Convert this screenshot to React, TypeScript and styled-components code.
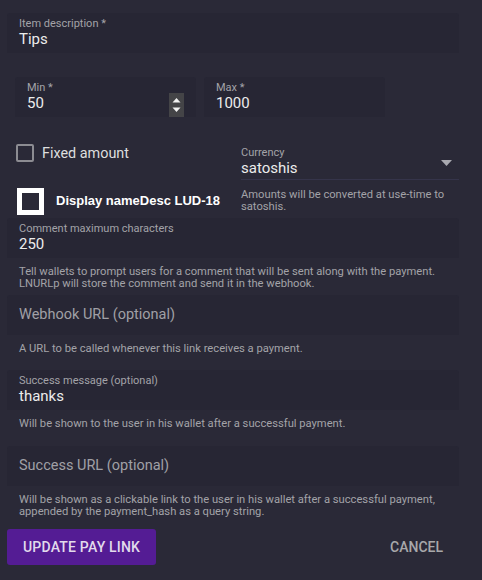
import styled, { createGlobalStyle } from "styled-components";

const GlobalStyle = createGlobalStyle`
  html, body {
    margin: 0;
    padding: 0;
    background: #2a2937;
  }
  body {
    font-family: Roboto, "Liberation Sans", sans-serif;
    color: #e6e6e6;
    min-height: 580px;
  }
`;

function Spinner() {
  return (
    <SpinBox>
      <svg width="15" height="24" viewBox="0 0 15 24">
        <path d="M3.5 9.5 L7.5 5 L11.5 9.5 Z" fill="#f2f2f2" />
        <path d="M3.5 14.5 L11.5 14.5 L7.5 19 Z" fill="#f2f2f2" />
      </svg>
    </SpinBox>
  );
}

export default function App() {
  return (
    <>
      <GlobalStyle />
      <Form>
        <Field>
          <Label>Item description *</Label>
          <Value>Tips</Value>
        </Field>

        <AmountRow>
          <Field>
            <Label>Min *</Label>
            <ValueRow>
              <Value>50</Value>
              <Spinner />
            </ValueRow>
          </Field>
          <Field>
            <Label>Max *</Label>
            <ValueRow>
              <Value>1000</Value>
            </ValueRow>
          </Field>
        </AmountRow>

        <OptionsGrid>
          <div>
            <CheckRow>
              <Check />
              <CheckLabel>Fixed amount</CheckLabel>
            </CheckRow>
            <NativeRow>
              <NativeCheck />
              <NativeLabel>Display nameDesc LUD-18</NativeLabel>
            </NativeRow>
          </div>
          <div>
            <Select>
              <div>
                <Label>Currency</Label>
                <Value>satoshis</Value>
              </div>
              <svg width="11" height="6" viewBox="0 0 11 6">
                <path d="M0 0 L11 0 L5.5 6 Z" fill="#a9a9b0" />
              </svg>
            </Select>
            <Hint $side>Amounts will be converted at use-time to satoshis.</Hint>
          </div>
        </OptionsGrid>

        <Field $top={3}>
          <Label>Comment maximum characters</Label>
          <Value>250</Value>
        </Field>
        <Hint>
          Tell wallets to prompt users for a comment that will be sent along with the payment.
          LNURLp will store the comment and send it in the webhook.
        </Hint>

        <Field $top={5}>
          <Placeholder>Webhook URL (optional)</Placeholder>
        </Field>
        <Hint>A URL to be called whenever this link receives a payment.</Hint>

        <Field $top={15}>
          <Label>Success message (optional)</Label>
          <Value>thanks</Value>
        </Field>
        <Hint>Will be shown to the user in his wallet after a successful payment.</Hint>

        <Field $top={16}>
          <Placeholder>Success URL (optional)</Placeholder>
        </Field>
        <Hint>
          Will be shown as a clickable link to the user in his wallet after a successful payment,
          appended by the payment_hash as a query string.
        </Hint>

        <Actions>
          <PrimaryButton>Update pay link</PrimaryButton>
          <FlatButton>Cancel</FlatButton>
        </Actions>
      </Form>
    </>
  );
}

const Form = styled.div`
  padding: 13px 23px 0 7px;
`;

const Field = styled.div<{ $top?: number }>`
  margin-top: ${(p) => p.$top ?? 0}px;
  height: 40px;
  box-sizing: border-box;
  padding: 5px 12px 0;
  background: #272634;
  border-radius: 3px 3px 0 0;
  display: flex;
  flex-direction: column;
`;

const Label = styled.div`
  font-size: 11px;
  line-height: 12px;
  color: #a3a3a8;
`;

const Value = styled.div`
  font-size: 15px;
  line-height: 18px;
  color: #ececec;
`;

const ValueRow = styled.div`
  display: flex;
  align-items: center;
  justify-content: space-between;
  height: 24px;
  margin-top: -3px;
`;

const SpinBox = styled.div`
  width: 15px;
  height: 24px;
  margin-top: 4px;
  background: #444447;
  display: flex;
`;

const Placeholder = styled.div`
  font-size: 14.5px;
  line-height: 30px;
  color: #a0a0a6;
`;

const AmountRow = styled.div`
  display: grid;
  grid-template-columns: 181px 181px;
  gap: 8px;
  margin: 24px 0 0 8px;
`;

const OptionsGrid = styled.div`
  display: grid;
  grid-template-columns: 226px 1fr;
  gap: 8px;
  margin-top: 23px;
`;

const CheckRow = styled.div`
  display: flex;
  align-items: center;
  height: 26px;
  padding-left: 9px;
  gap: 8px;
`;

const Check = styled.div`
  width: 18px;
  height: 18px;
  box-sizing: border-box;
  border: 2px solid #8c8c92;
  border-radius: 2px;
`;

const CheckLabel = styled.span`
  font-size: 14.4px;
  color: #dedede;
`;

const NativeRow = styled.div`
  display: flex;
  align-items: center;
  margin-top: 22px;
  padding-left: 10px;
  gap: 12px;
`;

const NativeCheck = styled.div`
  width: 27px;
  height: 27px;
  box-sizing: border-box;
  border: 5px solid #ffffff;
  background: #2a2937;
`;

const NativeLabel = styled.span`
  font-family: "Liberation Sans", Arial, sans-serif;
  font-weight: 700;
  font-size: 13px;
  color: #ffffff;
  margin-top: -2px;
`;

const Select = styled.div`
  height: 40px;
  box-sizing: border-box;
  padding-top: 7px;
  border-bottom: 1px solid #35344a;
  display: flex;
  justify-content: space-between;
  align-items: center;
  padding-right: 7px;

  & > div {
    align-self: flex-start;
  }
`;

const Hint = styled.div<{ $side?: boolean }>`
  font-size: 11.2px;
  line-height: 12px;
  color: #a3a3a8;
  padding: ${(p) => (p.$side ? "9px 0 0" : "8px 0 0 12px")};
`;

const Actions = styled.div`
  display: flex;
  justify-content: space-between;
  align-items: center;
  margin-top: 11px;
`;

const PrimaryButton = styled.button`
  height: 36px;
  padding: 0 16px;
  border: none;
  border-radius: 3px;
  background: #541c94;
  color: #e2dbec;
  font-family: Roboto, sans-serif;
  font-weight: 500;
  font-size: 14px;
  text-transform: uppercase;
  letter-spacing: 0.2px;
  cursor: pointer;
`;

const FlatButton = styled.button`
  height: 36px;
  padding: 0 16px;
  border: none;
  background: transparent;
  color: #a8a8aa;
  font-family: Roboto, sans-serif;
  font-weight: 500;
  font-size: 14px;
  text-transform: uppercase;
  cursor: pointer;
`;
